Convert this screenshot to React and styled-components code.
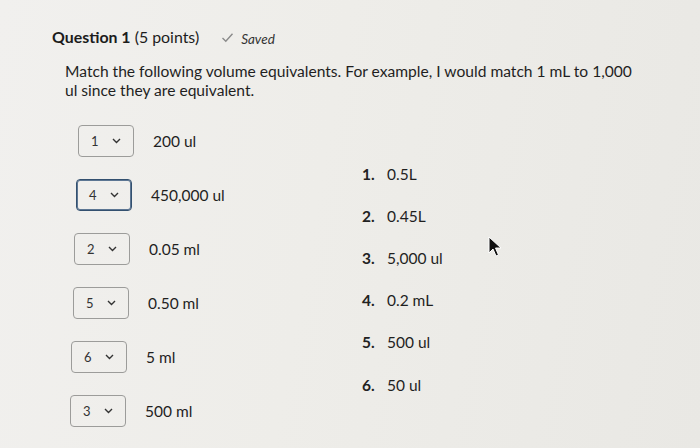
import React from 'react';
import styled, { createGlobalStyle } from 'styled-components';

const GlobalStyle = createGlobalStyle`
  html, body {
    margin: 0;
    padding: 0;
  }
  body {
    width: 700px;
    height: 448px;
    overflow: hidden;
    background: linear-gradient(100deg, #f1f0ee 0%, #eeede9 45%, #e9e8e4 100%);
    font-family: Lato, "Open Sans", sans-serif;
    color: #1f1f1f;
  }
`;

const matches = [
  { value: '1', label: '200 ul', shift: 8 },
  { value: '4', label: '450,000 ul', shift: 6, focused: true },
  { value: '2', label: '0.05 ml', shift: 4 },
  { value: '5', label: '0.50 ml', shift: 3 },
  { value: '6', label: '5 ml', shift: 1 },
  { value: '3', label: '500 ml', shift: 0 },
];

const choices = ['0.5L', '0.45L', '5,000 ul', '0.2 mL', '500 ul', '50 ul'];

function App() {
  return (
    <Page>
      <GlobalStyle />
      <Header>
        <Title>
          <strong>Question 1</strong> (5 points)
        </Title>
        <SavedTag>
          <svg width="13" height="11" viewBox="0 0 13 11">
            <path d="M1.5 6 L4.8 9.2 L11.5 1.8" fill="none" stroke="#8a8a8a" strokeWidth="1.4" />
          </svg>
          Saved
        </SavedTag>
      </Header>
      <Prompt>
        Match the following volume equivalents. For example, I would match 1 mL to 1,000 ul
        since they are equivalent.
      </Prompt>
      <MatchGrid>
        <MatchColumn>
          {matches.map((m) => (
            <MatchRow key={m.label} $shift={m.shift}>
              <SelectBox $focused={m.focused}>
                <span>{m.value}</span>
                <svg width="9" height="6" viewBox="0 0 9 6">
                  <path d="M1 1 L4.5 4.5 L8 1" fill="none" stroke="#333" strokeWidth="1.4" />
                </svg>
              </SelectBox>
              <MatchLabel>{m.label}</MatchLabel>
            </MatchRow>
          ))}
        </MatchColumn>
        <ChoiceList>
          {choices.map((c, i) => (
            <Choice key={c}>
              <ChoiceNumber>{i + 1}.</ChoiceNumber>
              {c}
            </Choice>
          ))}
        </ChoiceList>
      </MatchGrid>
      <Cursor width="14" height="22" viewBox="0 0 14 22">
        <path d="M1 1 L1 17 L5 13 L8 20 L10.5 19 L7.5 12 L13 12 Z" fill="#111" stroke="#fff" strokeWidth="1" />
      </Cursor>
    </Page>
  );
}

export default App;

const Page = styled.div`
  position: relative;
  width: 700px;
  height: 448px;
  box-sizing: border-box;
  padding: 27px 0 0 52px;
`;

const Header = styled.div`
  display: flex;
  align-items: baseline;
  gap: 22px;
`;

const Title = styled.div`
  font-size: 15.9px;
  color: #1c1c1c;
  strong {
    font-weight: 700;
  }
`;

const SavedTag = styled.div`
  display: flex;
  align-items: center;
  gap: 7px;
  font-size: 13.5px;
  font-style: italic;
  color: #333;
  svg {
    margin-top: -2px;
  }
`;

const Prompt = styled.p`
  margin: 15px 0 0 13px;
  width: 580px;
  font-size: 15.6px;
  line-height: 19px;
  color: #1f1f1f;
`;

const MatchGrid = styled.div`
  display: grid;
  grid-template-columns: 287px 1fr;
  margin-top: 14px;
`;

const MatchColumn = styled.div`
  display: flex;
  flex-direction: column;
`;

const MatchRow = styled.div`
  display: flex;
  align-items: center;
  height: 54px;
  margin-left: ${(p) => 18 + p.$shift}px;
`;

const SelectBox = styled.div`
  display: flex;
  align-items: center;
  justify-content: space-between;
  box-sizing: border-box;
  width: 56px;
  height: 32px;
  padding: 0 12px 0 12px;
  border: 1px solid ${(p) => (p.$focused ? '#33506f' : '#9c9c9a')};
  box-shadow: ${(p) => (p.$focused ? 'inset 0 0 0 1px #5c7693' : 'none')};
  border-radius: 4px;
  background: transparent;
  font-size: 13px;
  color: #333;
`;

const MatchLabel = styled.span`
  margin-left: 19px;
  font-size: 15.5px;
  color: #1f1f1f;
`;

const ChoiceList = styled.ol`
  list-style: none;
  margin: 39px 0 0 23px;
  padding: 0;
`;

const Choice = styled.li`
  display: flex;
  align-items: center;
  height: 42.2px;
  font-size: 15.5px;
  color: #1f1f1f;
`;

const ChoiceNumber = styled.span`
  width: 25px;
  font-weight: 700;
  color: #222;
`;

const Cursor = styled.svg`
  position: absolute;
  left: 488px;
  top: 236px;
`;
